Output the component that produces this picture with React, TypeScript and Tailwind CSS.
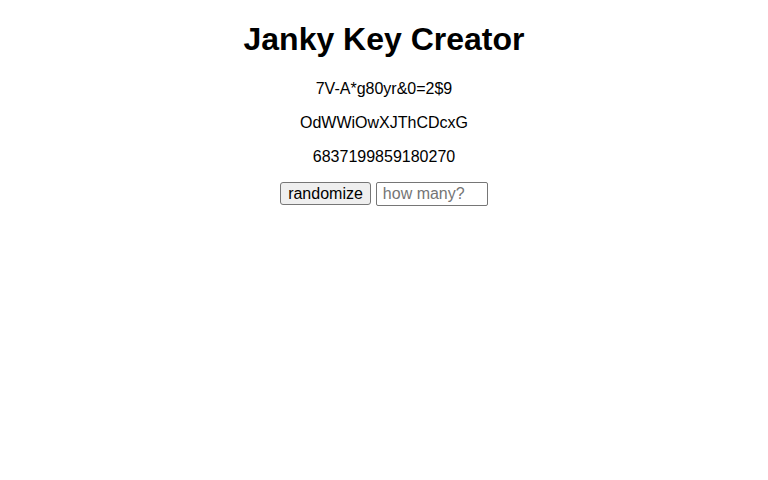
export default function App() {
  const keys = ["7V-A*g80yr&0=2$9", "OdWWiOwXJThCDcxG", "6837199859180270"];
  return (
    <div className="min-h-[480px] bg-white text-black text-center font-['Liberation_Sans',Arial,sans-serif]">
      <h1 className="pt-[21px] text-[32px] leading-[37px] font-bold">Janky Key Creator</h1>
      <div className="mt-[22px] flex flex-col gap-[16px] text-[16px] leading-[18px]">
        {keys.map((k) => (
          <p key={k}>{k}</p>
        ))}
      </div>
      <div className="mt-[16px] flex justify-center items-start gap-[5px]">
        <button className="h-[23px] px-[7px] text-[16px] leading-[18px] bg-[#efefef] border border-[#767676] rounded-[3px]">
          randomize
        </button>
        <input
          placeholder="how many?"
          className="h-[24px] w-[112px] px-[6px] text-[16px] leading-[18px] border border-[#767676] rounded-[2px] placeholder:text-[#757575] outline-none"
        />
      </div>
    </div>
  );
}
